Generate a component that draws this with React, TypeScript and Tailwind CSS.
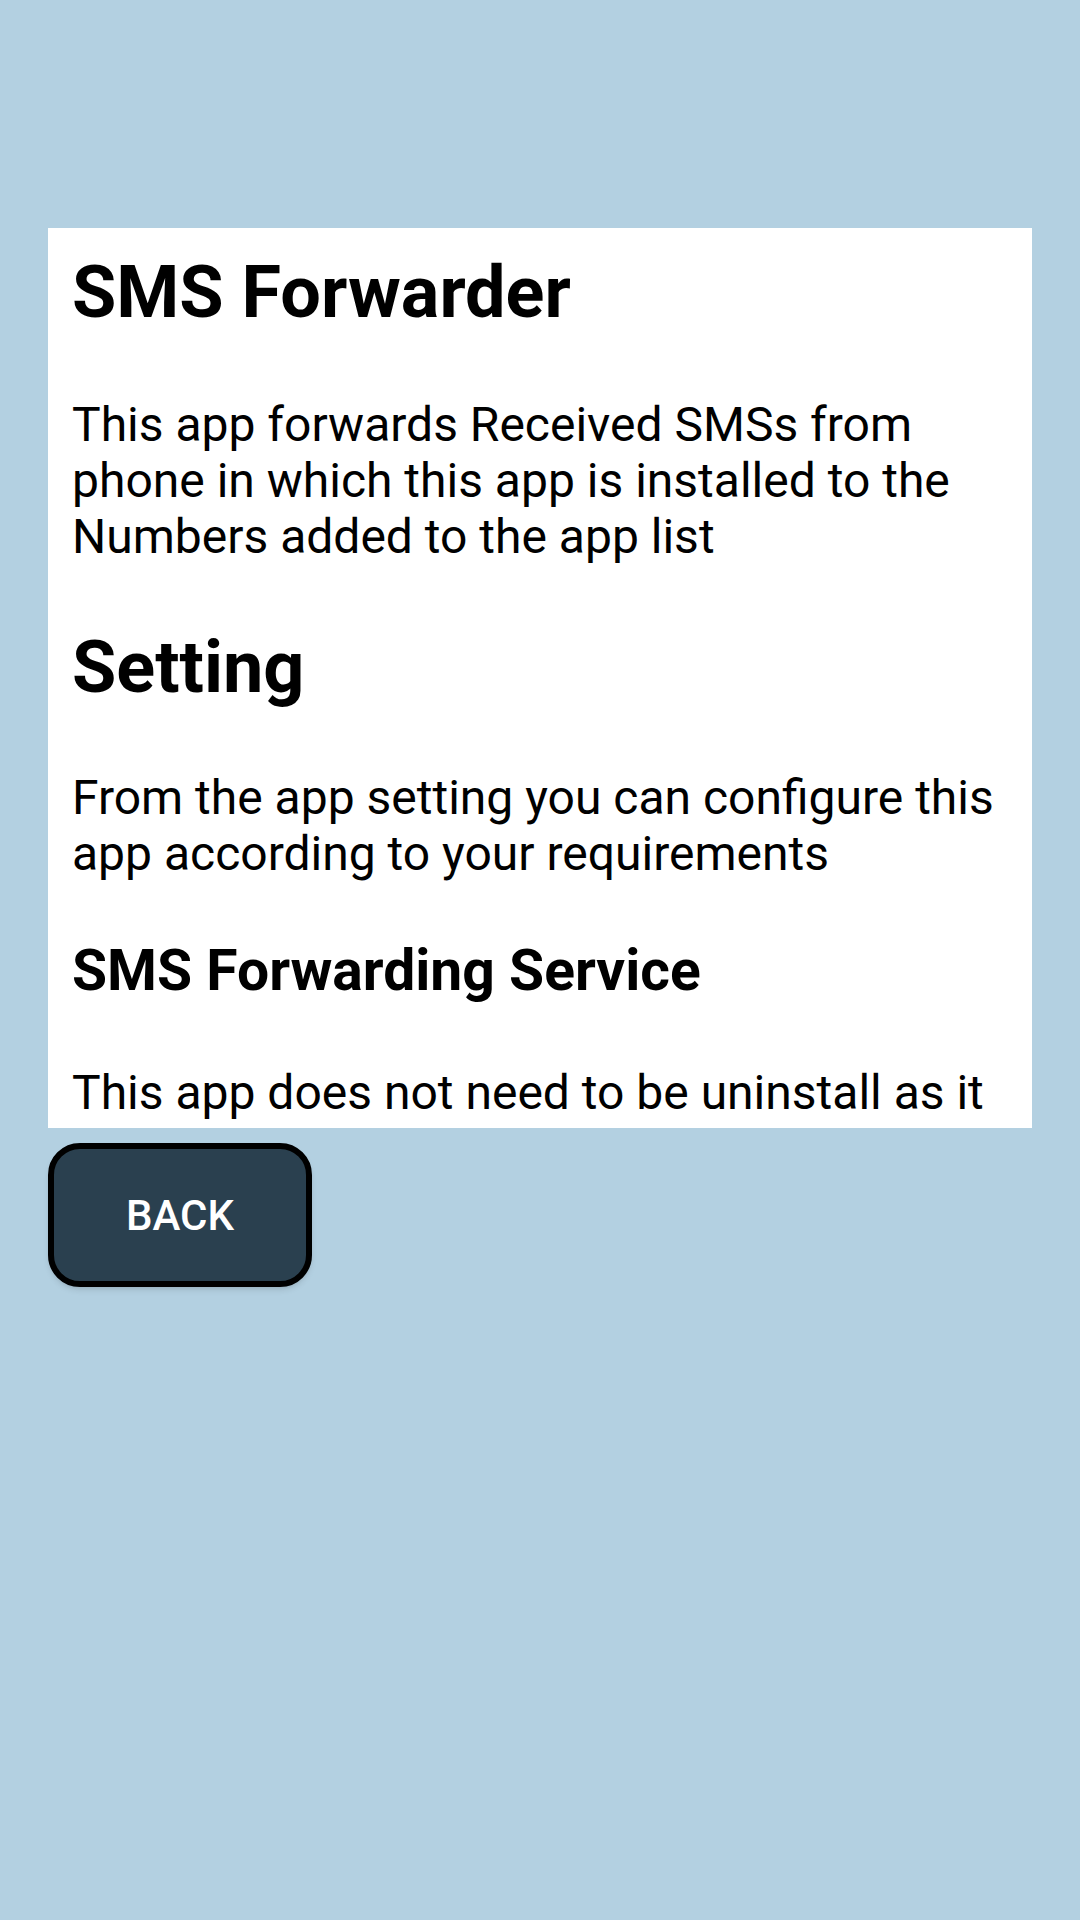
import React from 'react';

const font = { fontFamily: 'Roboto, "Noto Sans", sans-serif' };

const App: React.FC = () => {
  return (
    <div className="w-[1080px] h-[1920px] bg-[#b3d0e1] pt-[228px] px-[48px]" style={font}>
      {/* Scrolling help card */}
      <div className="w-[984px] h-[900px] bg-white overflow-hidden pl-[24px] pr-[24px] pt-[21px] text-black">
        <h1 className="text-[72px] leading-[88px] font-bold">SMS Forwarder</h1>
        <p className="mt-[60px] text-[48px] leading-[56px]">
          This app forwards Received SMSs from phone in which this app is installed to the Numbers added to the app list
        </p>
        <h1 className="mt-[59px] text-[72px] leading-[88px] font-bold">Setting</h1>
        <p className="mt-[58px] text-[48px] leading-[56px]">
          From the app setting you can configure this app according to your requirements
        </p>
        <h3 className="mt-[56px] text-[57px] leading-[66px] font-bold">SMS Forwarding Service</h3>
        <p className="mt-[61px] text-[48px] leading-[56px]">
          This app does not need to be uninstall as it can be turned off from the app setting whenever you like
        </p>
      </div>

      {/* Back button */}
      <button className="mt-[15px] w-[264px] h-[144px] rounded-[32px] border-[6px] border-black bg-[#2a404f] text-white text-[42px] font-medium shadow-md flex items-center justify-center">
        BACK
      </button>
    </div>
  );
};

export default App;
